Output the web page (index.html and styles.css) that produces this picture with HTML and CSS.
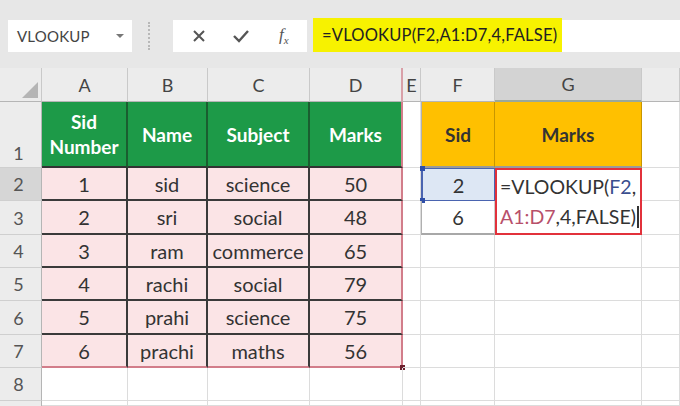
FILE: index.html
```html
<!DOCTYPE html>
<html>
<head>
<meta charset="utf-8">
<link rel="stylesheet" href="styles.css">
</head>
<body>
<div class="app">
  <div class="toolbar">
    <div class="namebox"><span class="name">VLOOKUP</span><span class="caret"></span></div>
    <div class="grip"></div>
    <div class="fxbtns">
      <svg class="ico" width="16" height="16" viewBox="0 0 16 16"><path d="M3 3 L13 13 M13 3 L3 13" stroke="#555" stroke-width="2" fill="none"/></svg>
      <svg class="ico" width="18" height="16" viewBox="0 0 18 16"><path d="M2 8 L7 13 L16 3" stroke="#555" stroke-width="2.4" fill="none"/></svg>
      <span class="fx">f<sub>x</sub></span>
    </div>
    <div class="formula"><span class="hl">=VLOOKUP(F2,A1:D7,4,FALSE)</span></div>
  </div>
  <div class="sheet">
    <div class="ch corner"><span class="tri"></span></div>
    <div class="ch">A</div><div class="ch">B</div><div class="ch">C</div><div class="ch dsep">D</div><div class="ch">E</div><div class="ch">F</div><div class="ch sel">G</div><div class="ch"></div>

    <div class="rh r1">1</div>
    <div class="gh">Sid<br>Number</div><div class="gh">Name</div><div class="gh">Subject</div><div class="gh last">Marks</div>
    <div class="c"></div><div class="oh fcol">Sid</div><div class="oh">Marks</div><div class="c"></div>

    <div class="rh sel">2</div>
    <div class="d">1</div><div class="d">sid</div><div class="d">science</div><div class="d last">50</div>
    <div class="c"></div><div class="f2">2<span class="h tl"></span><span class="h bl"></span></div>
    <div class="editor"><span>=VLOOKUP(<span class="refb">F2</span>,</span><span><span class="refr">A1:D7</span>,4,FALSE)<span class="cursor"></span></span></div>
    <div class="c"></div>

    <div class="rh">3</div>
    <div class="d">2</div><div class="d">sri</div><div class="d">social</div><div class="d last">48</div>
    <div class="c"></div><div class="f3">6</div><div class="c"></div>

    <div class="rh">4</div>
    <div class="d">3</div><div class="d">ram</div><div class="d">commerce</div><div class="d last">65</div>
    <div class="c"></div><div class="c"></div><div class="c"></div><div class="c"></div>

    <div class="rh">5</div>
    <div class="d">4</div><div class="d">rachi</div><div class="d">social</div><div class="d last">79</div>
    <div class="c"></div><div class="c"></div><div class="c"></div><div class="c"></div>

    <div class="rh">6</div>
    <div class="d">5</div><div class="d">prahi</div><div class="d">science</div><div class="d last">75</div>
    <div class="c"></div><div class="c"></div><div class="c"></div><div class="c"></div>

    <div class="rh">7</div>
    <div class="d bot">6</div><div class="d bot">prachi</div><div class="d bot">maths</div><div class="d bot last">56<span class="handle"></span></div>
    <div class="c"></div><div class="c"></div><div class="c"></div><div class="c"></div>

    <div class="rh">8</div>
    <div class="c"></div><div class="c"></div><div class="c"></div><div class="c"></div>
    <div class="c"></div><div class="c"></div><div class="c"></div><div class="c"></div>

    <div class="rh"></div>
    <div class="c"></div><div class="c"></div><div class="c"></div><div class="c"></div>
    <div class="c"></div><div class="c"></div><div class="c"></div><div class="c"></div>
  </div>
</div>
</body>
</html>
```
FILE: styles.css
```css
html, body { margin: 0; padding: 0; background: #fff; }
body { width: 680px; height: 406px; overflow: hidden; font-family: Lato, "Liberation Sans", sans-serif; }
.app { width: 680px; height: 406px; overflow: hidden; }

.toolbar {
  height: 68px; box-sizing: border-box; background: #e7e7e7;
  display: flex; align-items: flex-start; padding-top: 20px;
}
.namebox {
  margin-left: 8px; width: 124px; height: 32px; background: #fff;
  display: flex; align-items: center; justify-content: space-between; box-sizing: border-box; padding: 0 8px 0 9px;
}
.name { font-size: 15px; color: #444; letter-spacing: 0.2px; }
.caret { width: 0; height: 0; border-left: 4px solid transparent; border-right: 4px solid transparent; border-top: 4px solid #777; }
.grip { width: 2px; height: 28px; margin: 2px 0 0 16px; border-left: 2px dotted #b8b8b8; }
.fxbtns {
  margin-left: 21px; width: 134px; height: 32px; background: #fff;
  display: flex; align-items: center; justify-content: space-around; padding: 0 6px; box-sizing: border-box;
}
.fx { font-family: "Liberation Serif", serif; font-style: italic; font-size: 17px; color: #555; margin-left: 4px; }
.fx sub { font-size: 11px; }
.formula {
  margin-left: 6px; flex: 1; height: 32px; background: #fff; display: flex; align-items: stretch;
}
.hl {
  background: #f7f200; margin-top: -2px; height: 34px; width: 249px; box-sizing: border-box;
  padding-left: 9px; display: flex; align-items: center; font-size: 16.5px; letter-spacing: 0.2px; color: #222;
}

.sheet {
  display: grid;
  grid-template-columns: 42px 86px 80px 102px 93px 18px 74px 147px 1fr;
  grid-template-rows: 34px 66px 33px 34px 33px 33px 34px 33px 33px 5px;
  font-size: 19px; color: #333;
}
.sheet > div { box-sizing: border-box; display: flex; align-items: center; justify-content: center; position: relative; }
.c { border-right: 1px solid #dcdcdc; border-bottom: 1px solid #dcdcdc; }
.ch {
  background: #ececec; color: #444; font-size: 18px;
  border-right: 1px solid #c9c9c9; border-bottom: 1px solid #b5b5b5;
}
.ch.sel { background: #d3d3d3; border-bottom: 2px solid #9aa89a; }
.ch.dsep { border-right: 2px solid #d9a0a8; }
.corner { justify-content: flex-end !important; align-items: flex-end !important; }
.tri { width: 0; height: 0; border-left: 16px solid transparent; border-bottom: 16px solid #b5b5b5; margin: 0 3px 3px 0; }
.rh {
  background: #ececec; color: #555; font-size: 18px;
  border-right: 1px solid #b5b5b5; border-bottom: 1px solid #cfcfcf;
  align-items: flex-end !important; padding-bottom: 5px; padding-right: 4px;
}
.rh.sel { background: #d6d6d6; }
.rh.r1 { padding-bottom: 3px; }

.gh {
  background: #1d9a48; color: #fff; font-weight: bold; font-size: 19px; line-height: 25px; text-align: center;
  border-right: 2px solid #1a5e30; border-bottom: 2px solid #333;
}
.d { background: #fbe4e6; border-right: 2px solid #3a3a3a; border-bottom: 2px solid #3a3a3a; font-size: 20px; }
.last { border-right: 2px solid #d27d8a !important; }
.bot { border-bottom: 2px solid #d27d8a; }
.handle { position: absolute; right: -4px; bottom: -4px; width: 5px; height: 5px; background: #6b1f2c; }

.oh {
  background: #ffc000; color: #333; font-weight: bold; font-size: 19px;
  border-right: 1px solid #c89600; border-bottom: 2px solid #9a9a9a;
}
.fcol { border-left: 1px solid #b0b0b0; }
.f2 { background: #dde7f4; border: 1px solid #4a64b0; border-left-width: 2px; font-size: 20px; }
.h { position: absolute; width: 5px; height: 5px; background: #2f4fa8; }
.h.tl { left: -3px; top: -3px; }
.h.bl { left: -3px; bottom: -3px; }
.f3 { border-left: 1px solid #b0b0b0; border-bottom: 2px solid #a8a8a8; border-right: 1px solid #ccc; font-size: 20px; }
.editor {
  grid-row: span 2; background: #fff; border: 2px solid #e2313b;
  flex-direction: column; align-items: flex-start !important; justify-content: center !important;
  padding-left: 3px; font-size: 19.5px; line-height: 30px; color: #333;
}
.refb { color: #3a4f8e; }
.refr { color: #b8506a; }
.cursor { display: inline-block; width: 2px; height: 22px; background: #333; vertical-align: -4px; margin-left: 1px; }
```
